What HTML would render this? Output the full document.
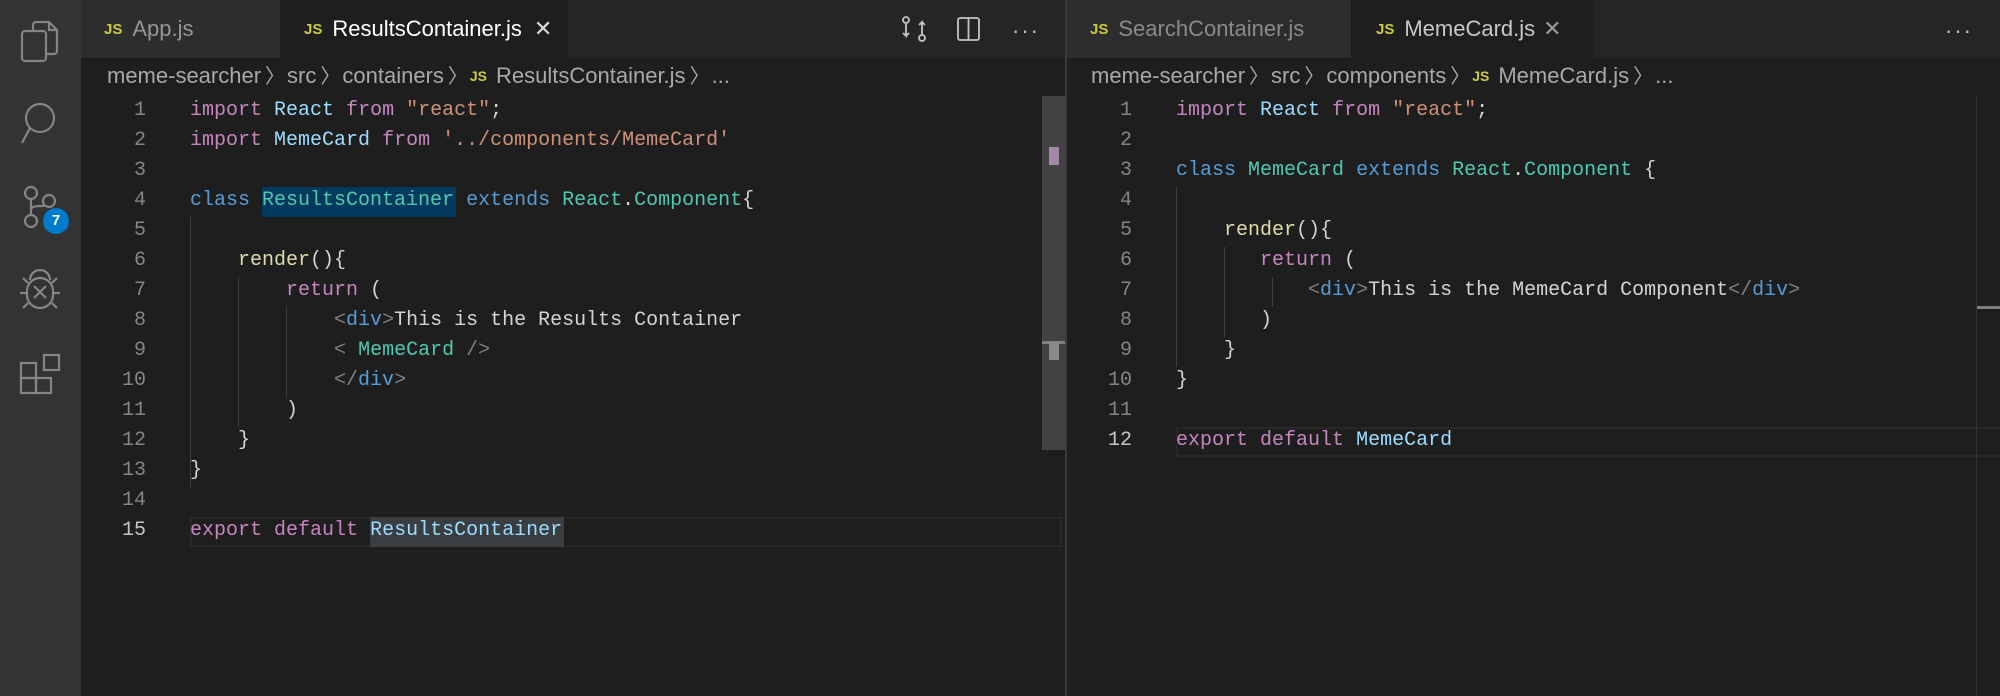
<!DOCTYPE html>
<html><head><meta charset="utf-8"><style>
*{margin:0;padding:0;box-sizing:border-box}
body{width:2000px;height:696px;background:#1e1e1e;overflow:hidden;position:relative;font-family:"Liberation Sans",sans-serif}
.abs{position:absolute}
.tab{position:absolute;top:0;height:58px;font-size:22px;line-height:58px;white-space:nowrap}
.js{color:#cbcb41;font-weight:bold;font-size:15px;margin-right:10px;display:inline-block;transform:translateY(-2px)}
.bc{position:absolute;top:63px;font-size:22px;color:#a9a9a9;white-space:nowrap;line-height:26px}
.bc .js{font-size:14px;margin-right:9px}
.sep{color:#a9a9a9;margin:0 2px 0 4px;font-size:20px}
.code{position:absolute;font-family:"Liberation Mono",monospace;font-size:20px;line-height:30px;white-space:pre;color:#d4d4d4}
.ln{position:absolute;font-family:"Liberation Mono",monospace;font-size:20px;line-height:30px;white-space:pre;color:#858585;text-align:right}
.k{color:#c586c0}.v{color:#9cdcfe}.c{color:#569cd6}.t{color:#4ec9b0}.s{color:#ce9178}.f{color:#dcdcaa}.g{color:#808080}
.guide{position:absolute;width:1px;background:#404040}
</style></head><body>
<div class="abs" style="left:0;top:0;width:81px;height:696px;background:#333333"></div>
<svg class="abs" style="left:0;top:0" width="81" height="400" fill="none" stroke="#858585" stroke-width="2.2">
<path d="M33 31 V25 a3 3 0 0 1 3-3 h13 l8 8 v21 a3 3 0 0 1-3 3 h-9"/><path d="M49 22 v8 h8"/>
<rect x="22" y="31" width="24" height="30" rx="3"/>
<circle cx="40" cy="118" r="14"/><path d="M30 128 L22 143"/>
<circle cx="31" cy="193" r="6"/><circle cx="49" cy="201" r="6"/><circle cx="31" cy="221" r="6"/>
<path d="M31 199 V215 M31 210 Q31 206 40 206 H44"/>
<path d="M30 280 a10 10 0 0 1 20 0"/><rect x="27" y="278" width="26" height="30" rx="13"/>
<path d="M34 286 l12 12 M46 286 l-12 12 M20 293 h7 M53 293 h7 M23 278 l5 5 M57 278 l-5 5 M23 308 l5-5 M57 308 l-5-5"/>
<rect x="21" y="363" width="15" height="15"/><rect x="21" y="378" width="15" height="15"/><rect x="36" y="378" width="15" height="15"/><rect x="44" y="355" width="15" height="15"/>
</svg>
<div class="abs" style="left:43px;top:208px;width:26px;height:26px;border-radius:13px;background:#007acc;color:#fff;font-size:15px;font-weight:bold;text-align:center;line-height:26px">7</div>

<div class="abs" style="left:81px;top:0;width:985px;height:58px;background:#252526"></div>
<div class="tab" style="left:81px;width:199px;background:#2d2d2d;padding-left:23px;color:#969696"><span class="js">JS</span>App.js</div>
<div class="tab" style="left:280px;width:288px;background:#1e1e1e;padding-left:24px;color:#ffffff"><span class="js">JS</span>ResultsContainer.js<span style="margin-left:12px;color:#ddd;font-size:22px">✕</span></div>
<svg class="abs" style="left:900px;top:14px" width="140" height="32" fill="none" stroke="#c5c5c5" stroke-width="1.8">
<circle cx="6" cy="6" r="3"/><circle cx="22" cy="24" r="3"/><path d="M6 9 V22 l-3-3 M6 22 l3-3"/><path d="M22 21 V8 l-3 3 M22 8 l3 3"/>
<rect x="58" y="4" width="21" height="22" rx="2"/><path d="M68.5 4 V26"/>
</svg>
<div class="abs" style="left:1012px;top:18px;color:#c5c5c5;font-size:22px;letter-spacing:2px">···</div>

<div class="bc" style="left:107px">meme-searcher<span class="sep">〉</span>src<span class="sep">〉</span>containers<span class="sep">〉</span><span class="js">JS</span>ResultsContainer.js<span class="sep">〉</span>...</div>

<div class="abs" style="left:262px;top:187px;width:194px;height:30px;background:#04395e"></div>
<div class="abs" style="left:190px;top:517px;width:872px;height:30px;border:2px solid #282828"></div>
<div class="abs" style="left:370px;top:517px;width:194px;height:30px;background:#3a3d41"></div>
<div class="guide" style="left:190px;top:217px;height:270px"></div>
<div class="guide" style="left:238px;top:277px;height:150px"></div>
<div class="guide" style="left:286px;top:307px;height:90px"></div>

<div class="ln" style="left:100px;top:96px;width:46px">1
2
3
4
5
6
7
8
9
10
11
12
13
14
<span style="color:#c6c6c6">15</span></div>
<div class="code" style="left:190px;top:96px"><span class="k">import</span> <span class="v">React</span> <span class="k">from</span> <span class="s">"react"</span>;
<span class="k">import</span> <span class="v">MemeCard</span> <span class="k">from</span> <span class="s">'../components/MemeCard'</span>

<span class="c">class</span> <span class="t">ResultsContainer</span> <span class="c">extends</span> <span class="t">React</span>.<span class="t">Component</span>{

    <span class="f">render</span>(){
        <span class="k">return</span> (
            <span class="g">&lt;</span><span class="c">div</span><span class="g">&gt;</span>This is the Results Container
            <span class="g">&lt;</span> <span class="t">MemeCard</span> <span class="g">/&gt;</span>
            <span class="g">&lt;/</span><span class="c">div</span><span class="g">&gt;</span>
        )
    }
}

<span class="k">export</span> <span class="k">default</span> <span class="v">ResultsContainer</span></div>

<div class="abs" style="left:1042px;top:96px;width:24px;height:354px;background:#424242;border-left:1px solid #4a4a4a"></div>
<div class="abs" style="left:1049px;top:147px;width:10px;height:18px;background:#a488a8"></div>
<div class="abs" style="left:1042px;top:341px;width:24px;height:3px;background:#808080"></div>
<div class="abs" style="left:1049px;top:342px;width:10px;height:18px;background:#8a8a8a"></div>

<div class="abs" style="left:1065px;top:0;width:2px;height:696px;background:#3a3a3a"></div>

<div class="abs" style="left:1067px;top:0;width:933px;height:58px;background:#252526"></div>
<div class="tab" style="left:1067px;width:284px;background:#2d2d2d;padding-left:23px;color:#8a8a8a"><span class="js">JS</span>SearchContainer.js</div>
<div class="tab" style="left:1351px;width:242px;background:#1e1e1e;padding-left:25px;color:#c8c8c8"><span class="js">JS</span>MemeCard.js<span style="margin-left:8px;color:#999;font-size:22px">✕</span></div>
<div class="abs" style="left:1945px;top:18px;color:#c5c5c5;font-size:22px;letter-spacing:2px">···</div>

<div class="bc" style="left:1091px">meme-searcher<span class="sep">〉</span>src<span class="sep">〉</span>components<span class="sep">〉</span><span class="js">JS</span>MemeCard.js<span class="sep">〉</span>...</div>

<div class="abs" style="left:1176px;top:427px;width:824px;height:30px;border:2px solid #282828;border-right:none"></div>
<div class="guide" style="left:1176px;top:187px;height:180px"></div>
<div class="guide" style="left:1224px;top:247px;height:90px"></div>
<div class="guide" style="left:1272px;top:277px;height:30px"></div>

<div class="ln" style="left:1086px;top:96px;width:46px">1
2
3
4
5
6
7
8
9
10
11
<span style="color:#c6c6c6">12</span></div>
<div class="code" style="left:1176px;top:96px"><span class="k">import</span> <span class="v">React</span> <span class="k">from</span> <span class="s">"react"</span>;

<span class="c">class</span> <span class="t">MemeCard</span> <span class="c">extends</span> <span class="t">React</span>.<span class="t">Component</span> {

    <span class="f">render</span>(){
       <span class="k">return</span> (
           <span class="g">&lt;</span><span class="c">div</span><span class="g">&gt;</span>This is the MemeCard Component<span class="g">&lt;/</span><span class="c">div</span><span class="g">&gt;</span>
       )
    }
}

<span class="k">export</span> <span class="k">default</span> <span class="v">MemeCard</span></div>

<div class="abs" style="left:1976px;top:95px;width:1px;height:601px;background:#333"></div>
<div class="abs" style="left:1977px;top:306px;width:23px;height:3px;background:#808080"></div>
</body></html>
